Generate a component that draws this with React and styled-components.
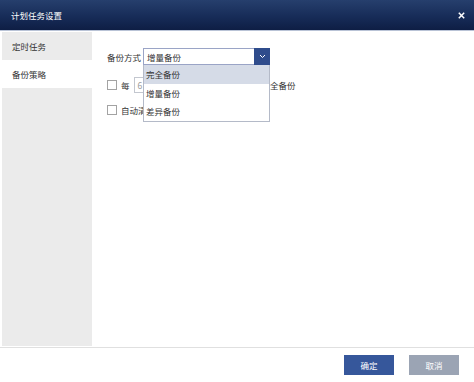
import { useState } from "react"
import styled, { createGlobalStyle } from "styled-components"

const GlobalStyle = createGlobalStyle`
    html, body {
        margin: 0;
        padding: 0;
        background: #ffffff;
    }
    * {
        box-sizing: border-box;
    }
`

const Window = styled.div`
    width: 474px;
    height: 382px;
    display: flex;
    flex-direction: column;
    background: #ffffff;
    font-family: "Noto Sans CJK SC", "Microsoft YaHei", sans-serif;
    font-size: 8.5px;
    color: #333333;
    overflow: hidden;
`
const TitleBar = styled.div`
    height: 31px;
    flex: none;
    display: flex;
    align-items: center;
    justify-content: space-between;
    padding: 0 9px 0 11px;
    background: linear-gradient(to bottom, #263f6d 0%, #172c58 55%, #0e1e44 100%);
    border-bottom: 1px solid #b9c3d6;
    color: #ffffff;
`
const Title = styled.span`
    font-size: 8.5px;
`
const Close = styled.svg`
    width: 7px;
    height: 7px;
`
const Body = styled.div`
    flex: 1;
    display: flex;
    padding: 1px 0 1px 2px;
    min-height: 0;
`
const Sidebar = styled.div`
    width: 90px;
    flex: none;
    display: flex;
    flex-direction: column;
    background: #ebebeb;
`
const NavItem = styled.div`
    height: 28px;
    display: flex;
    align-items: center;
    padding-left: 10px;
    background: ${(props) => (props.$active ? "#ffffff" : "#ebebeb")};
    color: #333333;
    cursor: pointer;
`
const Content = styled.div`
    flex: 1;
    display: flex;
    flex-direction: column;
    padding: 16px 15px 0 15px;
`
const Row = styled.div`
    display: flex;
    align-items: center;
    height: ${(props) => props.$h || 17}px;
    margin-top: ${(props) => props.$mt || 0}px;
`
const Label = styled.span`
    margin-right: 2px;
    white-space: nowrap;
`
const SelectBox = styled.div`
    position: relative;
    width: 127px;
    height: 17px;
    border: 1px solid #9aa4c6;
    display: flex;
    align-items: center;
    padding-left: 3px;
    background: #ffffff;
    cursor: pointer;
`
const SelectButton = styled.div`
    position: absolute;
    top: -1px;
    right: -1px;
    width: 16px;
    height: 17px;
    background: #2f4c8c;
    display: flex;
    align-items: center;
    justify-content: center;
`
const Options = styled.div`
    position: absolute;
    top: 16px;
    left: -1px;
    width: 127px;
    background: #ffffff;
    border: 1px solid #b4bac8;
    border-top: none;
    z-index: 2;
`
const Option = styled.div`
    height: 18.5px;
    display: flex;
    align-items: center;
    padding-left: 2px;
    background: ${(props) => (props.$hover ? "#d5dbe7" : "#ffffff")};
    color: #333333;
`
const Check = styled.span`
    width: 10px;
    height: 10px;
    border: 1px solid #a3a3a3;
    background: #ffffff;
    margin-right: 4px;
    flex: none;
`
const NumberInput = styled.div`
    width: 39px;
    height: 16px;
    border: 1px solid #c3c7cf;
    margin: 0 4px 0 4px;
    display: flex;
    align-items: center;
    padding-left: 3px;
    color: #9a9a9a;
`
const Footer = styled.div`
    height: 35px;
    flex: none;
    border-top: 1px solid #e0e0e0;
    display: flex;
    justify-content: flex-end;
    gap: 15px;
    padding: 7px 15px 0 0;
`
const Button = styled.div`
    width: 50px;
    height: 20px;
    display: flex;
    align-items: center;
    justify-content: center;
    color: #ffffff;
    background: ${(props) => (props.$primary ? "#36579b" : "#9ba4b4")};
    cursor: pointer;
`

const modes = ["完全备份", "增量备份", "差异备份"]

export default function App() {
    const [tab, setTab] = useState(1)
    const [mode] = useState("增量备份")
    const [hover, setHover] = useState(0)

    return (
        <Window>
            <GlobalStyle />
            <TitleBar>
                <Title>计划任务设置</Title>
                <Close viewBox="0 0 7 7">
                    <path d="M0.8 0.8L6.2 6.2M6.2 0.8L0.8 6.2" stroke="#ffffff" strokeWidth="1.5" />
                </Close>
            </TitleBar>
            <Body>
                <Sidebar>
                    <NavItem $active={tab === 0} onClick={() => setTab(0)}>定时任务</NavItem>
                    <NavItem $active={tab === 1} onClick={() => setTab(1)}>备份策略</NavItem>
                </Sidebar>
                <Content>
                    <Row>
                        <Label>备份方式</Label>
                        <SelectBox>
                            {mode}
                            <SelectButton>
                                <svg width="7" height="5" viewBox="0 0 7 5">
                                    <path d="M1 1L3.5 3.5L6 1" stroke="#ffffff" strokeWidth="1" fill="none" />
                                </svg>
                            </SelectButton>
                            <Options>
                                {modes.map((m, i) => (
                                    <Option key={m} $hover={hover === i} onMouseEnter={() => setHover(i)}>{m}</Option>
                                ))}
                            </Options>
                        </SelectBox>
                    </Row>
                    <Row $h={16} $mt={12}>
                        <Check />
                        <span>每</span>
                        <NumberInput>6</NumberInput>
                        <span>次增量备份后执行一次完全备份</span>
                    </Row>
                    <Row $h={16} $mt={9}>
                        <Check />
                        <span>自动清理过期备份</span>
                    </Row>
                </Content>
            </Body>
            <Footer>
                <Button $primary>确定</Button>
                <Button>取消</Button>
            </Footer>
        </Window>
    )
}
